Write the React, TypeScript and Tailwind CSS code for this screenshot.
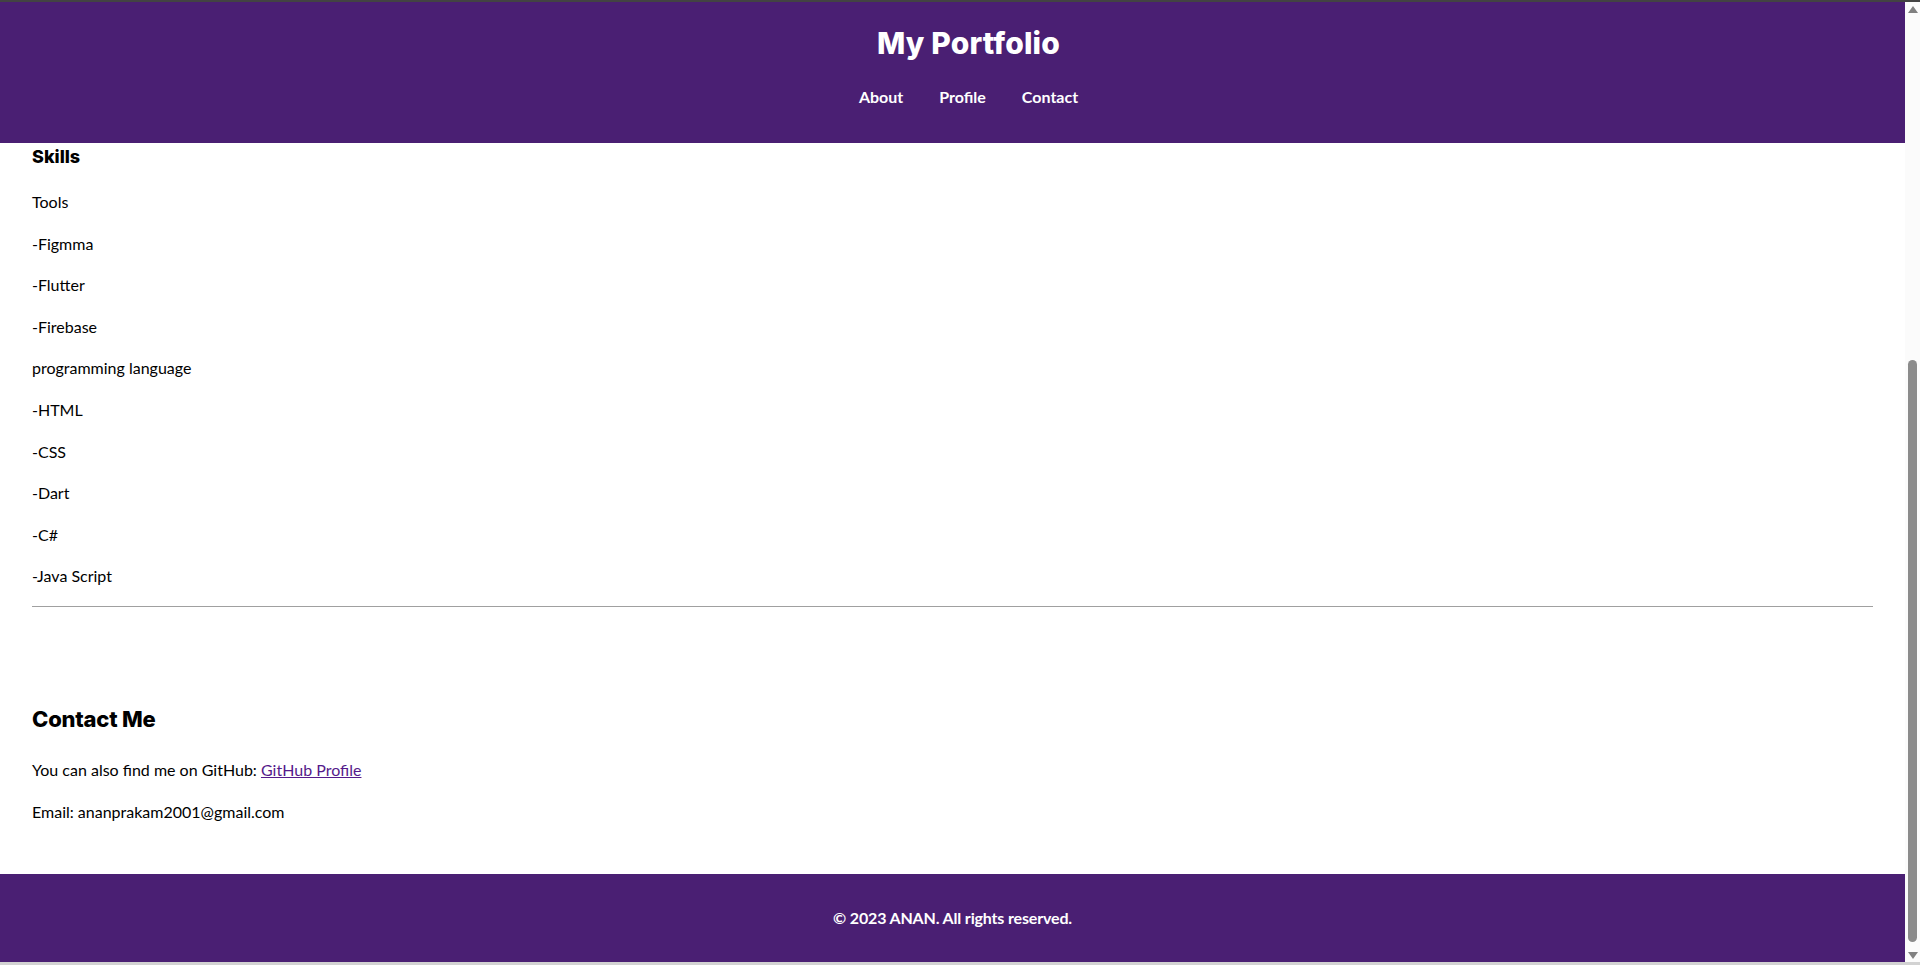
import React from "react";

const skills = [
  "Tools",
  "-Figmma",
  "-Flutter",
  "-Firebase",
  "programming language",
  "-HTML",
  "-CSS",
  "-Dart",
  "-C#",
  "-Java Script",
];

function Scrollbar() {
  return (
    <div className="w-[15px] h-full bg-[#fbfbfb] flex flex-col items-center pt-[4px]">
      <svg width="10" height="7" viewBox="0 0 10 7" className="block">
        <path d="M5 0 L10 7 L0 7 Z" fill="#808080" />
      </svg>
      <div className="mt-[347px] w-[9px] h-[582px] rounded-full bg-[#8b8b8b]" />
      <svg width="10" height="7" viewBox="0 0 10 7" className="block mt-[10px]">
        <path d="M0 0 L10 0 L5 7 Z" fill="#808080" />
      </svg>
    </div>
  );
}

export default function App() {
  return (
    <div className="w-[1920px] h-[965px] flex flex-col bg-white font-['Lato',sans-serif] text-black overflow-hidden">
      <div className="h-[2px] bg-[#434343] shrink-0" />
      <div className="flex-1 flex flex-row min-h-0">
        <div className="flex-1 flex flex-col min-w-0">
          <header className="h-[141px] shrink-0 bg-[#4a1f73] text-white pl-8 pt-[23px] flex flex-col items-center">
            <h1 className="font-['Inter',sans-serif] text-[30px] leading-[36px] font-extrabold tracking-[0.005em]">
              My Portfolio
            </h1>
            <nav className="mt-[24px]">
              <ul className="flex flex-row gap-9 text-base leading-6 font-bold">
                <li>About</li>
                <li>Profile</li>
                <li>Contact</li>
              </ul>
            </nav>
          </header>
          <main className="flex-1 px-8 pt-[2px]">
            <h3 className="font-['Inter',sans-serif] text-[18px] leading-[24px] font-extrabold">Skills</h3>
            <div className="mt-[20px] flex flex-col gap-4 text-base leading-[25.6px]">
              {skills.map((s) => (
                <p key={s}>{s}</p>
              ))}
            </div>
            <div className="mt-[17px] h-px bg-[#a0a0a0]" />
            <h2 className="mt-[97px] font-['Inter',sans-serif] text-[22px] leading-[30px] font-extrabold tracking-[-0.01em]">
              Contact Me
            </h2>
            <div className="mt-[23px] flex flex-col gap-4 text-base leading-[25.6px]">
              <p>
                You can also find me on GitHub:{" "}
                <a href="#" className="text-[#551a8b] underline">
                  GitHub Profile
                </a>
              </p>
              <p>Email: ananprakam2001@gmail.com</p>
            </div>
          </main>
          <footer className="h-[88px] shrink-0 bg-[#4a1f73] text-white flex items-center justify-center">
            <p className="text-base leading-6 font-bold tracking-[-0.01em]">© 2023 ANAN. All rights reserved.</p>
          </footer>
        </div>
        <Scrollbar />
      </div>
      <div className="h-[3px] bg-[#d2d2d2] shrink-0" />
    </div>
  );
}
